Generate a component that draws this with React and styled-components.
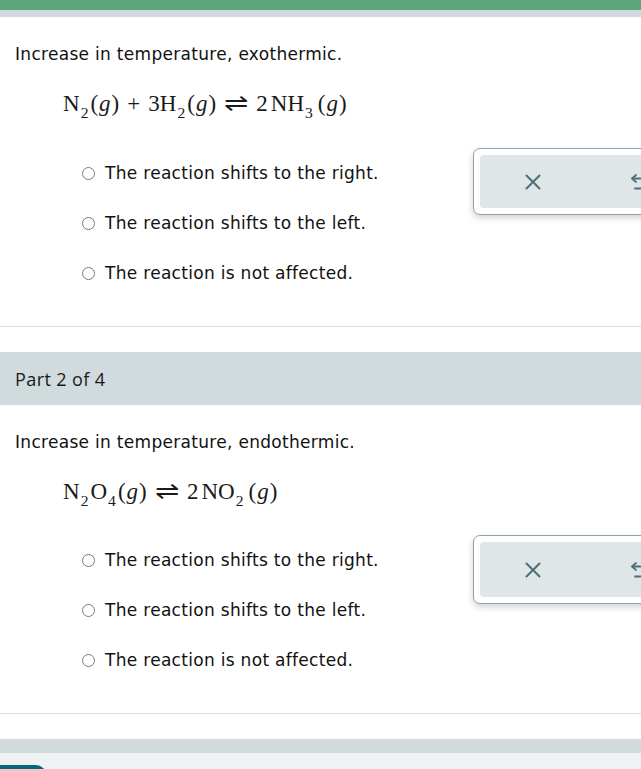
import React from 'react';
import styled, { createGlobalStyle } from 'styled-components';

const GlobalStyle = createGlobalStyle`
    html, body {
        margin: 0;
        padding: 0;
        background: #ffffff;
        overflow-x: hidden;
    }
    body {
        font-family: "DejaVu Sans", Verdana, sans-serif;
        color: #111;
    }
`;

const Page = styled.div`
    width: 641px;
    overflow: hidden;
`;

const TopBar = styled.div`
    height: 10px;
    background: #5ea57c;
`;

const Strip = styled.div`
    height: ${p => p.h}px;
    background: ${p => p.color || '#d1dadd'};
`;

const Section = styled.div`
    padding: 26px 0 43px 15px;
    border-bottom: 1px solid #d6dee1;
`;

const Title = styled.div`
    font-size: 17px;
    letter-spacing: 0.3px;
    line-height: 20px;
    height: 20px;
    padding-top: 1px;
`;

const Equation = styled.div`
    margin: 25px 0 0 48px;
    height: 30px;
    font-family: "Liberation Serif", "DejaVu Serif", serif;
    font-size: 23px;
    line-height: 30px;
    color: #1a1a1a;
    white-space: nowrap;
`;

const Sub = styled.sub`
    font-size: 0.68em;
    vertical-align: -0.45em;
    line-height: 0;
    margin: 0 ${p => p.after || 2}px 0 1px;
`;

const Gas = styled.span`
    font-style: italic;
    margin: 0 1px;
`;

const Op = styled.span`
    margin: 0 ${p => p.space || 6}px;
`;

const Arrow = styled.span`
    display: inline-block;
    font-family: "DejaVu Sans", sans-serif;
    font-size: 1.05em;
    line-height: 0;
    transform: scaleX(1.2);
    margin: 0 10px;
`;

const Coef = styled.span`
    margin-right: ${p => p.gap || 0}px;
`;

const AnswerRow = styled.div`
    display: flex;
    align-items: flex-start;
    margin-top: ${p => p.top}px;
`;

const Options = styled.div`
    display: flex;
    flex-direction: column;
    gap: 30px;
    padding: 15px 0 0 67px;
    width: 391px;
    flex-shrink: 0;
`;

const Option = styled.label`
    display: flex;
    align-items: center;
    gap: 10px;
    height: 20px;
    font-size: 17px;
    letter-spacing: 0.3px;
    line-height: 20px;
    white-space: nowrap;
    cursor: pointer;
`;

const Radio = styled.span`
    width: 11px;
    height: 11px;
    border: 1px solid #7a7a7a;
    border-radius: 50%;
    background: #fff;
    flex-shrink: 0;
`;

const ToolBox = styled.div`
    padding: 6px;
    border: 1px solid #8ea3ab;
    border-radius: 7px;
    background: #fff;
    box-shadow: 0 3px 7px rgba(0, 0, 0, 0.18);
    flex-shrink: 0;
`;

const ToolInner = styled.div`
    display: flex;
    background: #dfe6e8;
    border-radius: 4px;
    height: ${p => p.h}px;
`;

const ToolButton = styled.button`
    width: 106px;
    border: none;
    background: transparent;
    display: flex;
    align-items: center;
    justify-content: center;
    padding: 0;
    cursor: pointer;
`;

const PartHeader = styled.div`
    margin-top: 25px;
    height: 53px;
    background: #d1dadd;
    display: flex;
    align-items: center;
    padding-left: 15px;
    font-family: "Open Sans", "Noto Sans", sans-serif;
    font-size: 18px;
    letter-spacing: 0.4px;
    color: #1a1a1a;
`;

const Footer = styled.div`
    margin-top: 25px;
`;

const Light = styled.div`
    height: 16px;
    background: #eef2f3;
    position: relative;
    overflow: hidden;
`;

const Tab = styled.div`
    position: absolute;
    left: 0;
    top: 12px;
    width: 46px;
    height: 12px;
    background: #006b7f;
    border-top-right-radius: 10px;
`;

const XIcon = () => (
    <svg width="16" height="16" viewBox="0 0 16 16">
        <path d="M1.5 1.5 L14.5 14.5 M14.5 1.5 L1.5 14.5" stroke="#4b6f7b" strokeWidth="2" strokeLinecap="round" />
    </svg>
);

const UndoIcon = () => (
    <svg width="18" height="20" viewBox="0 0 18 20">
        <path d="M6 3 L2 6.5 L6 10" fill="none" stroke="#4b6f7b" strokeWidth="1.8" strokeLinecap="round" strokeLinejoin="round" />
        <path d="M2.5 6.5 H10 a5 5 0 0 1 0 10 H5" fill="none" stroke="#4b6f7b" strokeWidth="1.8" strokeLinecap="round" />
    </svg>
);

const choices = [
    'The reaction shifts to the right.',
    'The reaction shifts to the left.',
    'The reaction is not affected.',
];

const Answer = ({ top, boxHeight }) => (
    <AnswerRow top={top}>
        <Options>
            {choices.map(c => (
                <Option key={c}>
                    <Radio />
                    {c}
                </Option>
            ))}
        </Options>
        <ToolBox>
            <ToolInner h={boxHeight}>
                <ToolButton aria-label="clear"><XIcon /></ToolButton>
                <ToolButton aria-label="undo"><UndoIcon /></ToolButton>
            </ToolInner>
        </ToolBox>
    </AnswerRow>
);

export default function App() {
    return (
        <Page>
            <GlobalStyle />
            <TopBar />
            <Strip h={7} />

            <Section>
                <Title>Increase in temperature, exothermic.</Title>
                <Equation>
                    N<Sub>2</Sub>(<Gas>g</Gas>)<Op space={8}>+</Op>3H<Sub>2</Sub>(<Gas>g</Gas>)<Arrow>⇌</Arrow><Coef gap={3}>2</Coef>NH<Sub after={5}>3</Sub>(<Gas>g</Gas>)
                </Equation>
                <Answer top={29} boxHeight={53} />
            </Section>

            <PartHeader>Part 2 of 4</PartHeader>

            <Section>
                <Title>Increase in temperature, endothermic.</Title>
                <Equation>
                    N<Sub>2</Sub>O<Sub>4</Sub>(<Gas>g</Gas>)<Arrow>⇌</Arrow><Coef gap={3}>2</Coef>NO<Sub after={5}>2</Sub>(<Gas>g</Gas>)
                </Equation>
                <Answer top={28} boxHeight={55} />
            </Section>

            <Footer>
                <Strip h={14} />
                <Light>
                    <Tab />
                </Light>
            </Footer>
        </Page>
    );
}
